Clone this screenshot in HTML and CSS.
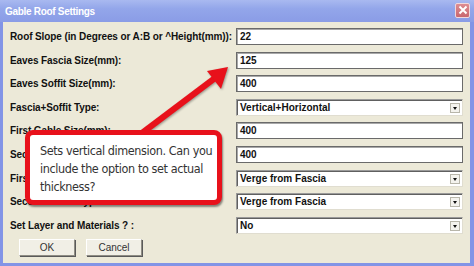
FILE: index.html
```html
<!DOCTYPE html>
<html lang="en">
<head>
    <title>Gable Roof Settings</title>
    <link rel="stylesheet" href="styles.css">
</head>
<body>
<div class="window">
    <div class="titlebar">
        <span class="title">Gable Roof Settings</span>
        <span class="close"><svg width="10" height="10" viewBox="0 0 10 10"><path d="M1.5 1.5 L8.5 8.5 M8.5 1.5 L1.5 8.5" stroke="#fff" stroke-width="2"/></svg></span>
    </div>
    <div class="body">
        <div class="form">
            <div class="lbl">Roof Slope (in Degrees or A:B or ^Height(mm)):</div>
            <div class="field">22</div>
            <div class="lbl">Eaves Fascia Size(mm):</div>
            <div class="field">125</div>
            <div class="lbl">Eaves Soffit Size(mm):</div>
            <div class="field">400</div>
            <div class="lbl">Fascia+Soffit Type:</div>
            <div class="field combo">Vertical+Horizontal<span class="drop"></span></div>
            <div class="lbl">First Gable Size(mm):</div>
            <div class="field">400</div>
            <div class="lbl">Second Gable Size(mm):</div>
            <div class="field">400</div>
            <div class="lbl">First Gable Type:</div>
            <div class="field combo">Verge from Fascia<span class="drop"></span></div>
            <div class="lbl">Second Gable Type:</div>
            <div class="field combo">Verge from Fascia<span class="drop"></span></div>
            <div class="lbl">Set Layer and Materials ? :</div>
            <div class="field combo">No<span class="drop"></span></div>
        </div>
        <div class="buttons">
            <button type="button" class="btn">OK</button>
            <button type="button" class="btn">Cancel</button>
        </div>
    </div>
</div>
<!-- annotation over the dialog -->
<svg class="arrow" width="474" height="266" viewBox="0 0 474 266">
    <line x1="138" y1="136" x2="215" y2="78" stroke="#e8111b" stroke-width="6"/>
    <polygon points="228,67 207,71 221,89" fill="#e8111b"/>
</svg>
<div class="callout">Sets vertical dimension. Can you<br>include the option to set actual<br>thickness?</div>
</body>
</html>
```

FILE: styles.css
```css
html,body{margin:0;padding:0;}
body{width:474px;height:266px;overflow:hidden;background:#8294e6;position:relative;font-family:"Liberation Sans",Arial,sans-serif;}
.window{width:474px;height:266px;display:flex;flex-direction:column;}
.titlebar{height:22px;display:flex;align-items:center;justify-content:space-between;padding:0 4px 0 5px;background:linear-gradient(#a9b9f0,#93a6ea 40%,#8a9ce6);}
.titlebar .title{color:#fff;font-weight:bold;font-size:10px;letter-spacing:-0.3px;}
.titlebar .close{width:13px;height:13px;display:flex;align-items:center;justify-content:center;background:linear-gradient(#dd8d92,#c9676f);border:1px solid #f0d8dc;border-radius:2px;margin-top:-2px;}
.body{flex:1;margin:0 4px 3px 3px;background:#ece9d8;padding:6px 7px 0 7px;}
.form{display:grid;grid-template-columns:226px 227px;grid-auto-rows:17px;row-gap:6.6px;}
.lbl{font-weight:bold;font-size:10px;letter-spacing:-0.1px;color:#111;display:flex;align-items:center;white-space:nowrap;}
.field{position:relative;background:#fff;border:1px solid #6a6a6a;box-shadow:inset 1px 1px 0 #a8a8a8;font-weight:bold;font-size:10px;color:#111;display:flex;align-items:center;padding-left:3px;}
.combo{border-color:#9a9a9a #e0ddd0 #e0ddd0 #9a9a9a;box-shadow:inset 1px 1px 0 #606060;}
.drop{position:absolute;right:2px;top:3px;width:10px;height:10px;background:#f4f3ee;border:1px solid #b8b6aa;box-sizing:border-box;}
.drop:after{content:"";position:absolute;left:2px;top:3px;border:2px solid transparent;border-top:3px solid #111;}
.buttons{display:flex;gap:11px;margin-top:5px;padding-left:9px;}
.btn{width:56px;height:17px;margin:0;padding:0;background:#f1efe6;border:1px solid;border-color:#fff #8f8d84 #8f8d84 #fff;box-shadow:1px 1px 0 #5a5a5a;font-family:"Liberation Sans",Arial,sans-serif;font-size:10px;color:#333;}
.arrow{position:absolute;left:0;top:0;filter:drop-shadow(1px 1px 1px rgba(0,0,0,0.35));}
.callout{position:absolute;left:25px;top:130px;width:177px;height:62px;border:5px solid #e8111b;border-radius:8px;background:#fff;box-shadow:1px 2px 2px rgba(0,0,0,0.45);padding:3px 0 0 10px;box-sizing:content-box;font-family:"DejaVu Sans",sans-serif;font-stretch:condensed;font-size:12.5px;letter-spacing:-0.4px;white-space:nowrap;line-height:18px;color:#333;display:flex;align-items:center;}
```
